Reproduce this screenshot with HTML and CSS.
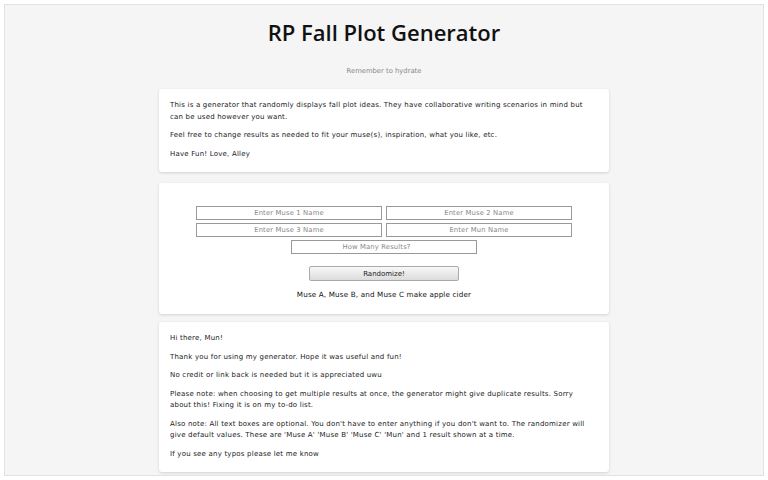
FILE: index.html
```html
<!DOCTYPE html>
<html lang="en">
<head>
    <meta charset="UTF-8">
    <meta name="viewport" content="width=device-width, initial-scale=1.0">
    <title>RP Fall Plot Generator</title>
    <link rel="stylesheet" href="styles.css">
</head>
<body>
    <div class="page">
        <h1>RP Fall Plot Generator</h1>
        <p class="tagline">Remember to hydrate</p>

        <div class="card">
            <p>This is a generator that randomly displays fall plot ideas. They have collaborative writing scenarios in mind but can be used however you want.</p>
            <p>Feel free to change results as needed to fit your muse(s), inspiration, what you like, etc.</p>
            <p>Have Fun! Love, Alley</p>
        </div>

        <div class="card generator">
            <div class="fields">
                <input type="text" id="muse1" placeholder="Enter Muse 1 Name">
                <input type="text" id="muse2" placeholder="Enter Muse 2 Name">
                <input type="text" id="muse3" placeholder="Enter Muse 3 Name">
                <input type="text" id="mun" placeholder="Enter Mun Name">
                <input type="number" id="count" class="wide" placeholder="How Many Results?">
            </div>
            <button id="randomizeBtn">Randomize!</button>
            <p id="result">Muse A, Muse B, and Muse C make apple cider</p>
        </div>

        <div class="card">
            <p>Hi there, Mun!</p>
            <p>Thank you for using my generator. Hope it was useful and fun!</p>
            <p>No credit or link back is needed but it is appreciated uwu</p>
            <p>Please note: when choosing to get multiple results at once, the generator might give duplicate results. Sorry about this! Fixing it is on my to-do list.</p>
            <p>Also note: All text boxes are optional. You don't have to enter anything if you don't want to. The randomizer will give default values. These are 'Muse A' 'Muse B' 'Muse C' 'Mun' and 1 result shown at a time.</p>
            <p>If you see any typos please let me know</p>
        </div>
    </div>
</body>
</html>
```

FILE: styles.css
```css
body {
    font-family: "DejaVu Sans", sans-serif;
    margin: 4px;
    background-color: #fff;
    color: #222;
}
.page {
    background-color: #f5f5f5;
    border: 1px solid #e2e2e2;
    height: 472px;
    box-sizing: border-box;
    padding-top: 12px;
    overflow: hidden;
}
h1 {
    font-family: "Open Sans", sans-serif;
    text-align: center;
    font-size: 22px;
    font-weight: 600;
    margin: 0;
    color: #111;
}
.tagline {
    text-align: center;
    font-size: 6.8px;
    color: #888;
    margin: 20px 0 14px;
}
.card {
    background-color: #fff;
    width: 450px;
    margin: 0 auto 11px;
    box-sizing: border-box;
    padding: 11px 14px 5px 11px;
    border-radius: 3px;
    box-shadow: 0 1px 3px rgba(0,0,0,0.15);
    font-size: 7px;
    letter-spacing: 0.2px;
    line-height: 11.5px;
}
.card p {
    margin: 0 0 7px;
}
.generator {
    text-align: center;
    padding: 23px 11px 6px;
    margin-bottom: 8px;
    letter-spacing: 0;
}
.fields {
    display: grid;
    grid-template-columns: 186px 186px;
    justify-content: center;
    gap: 3px 4px;
}
input {
    font-family: inherit;
    font-size: 6.8px;
    letter-spacing: 0.15px;
    height: 14px;
    box-sizing: border-box;
    border: 1px solid #999;
    padding: 0;
    text-align: center;
}
input::placeholder {
    color: #888;
}
.wide {
    grid-column: 1 / 3;
    justify-self: center;
    width: 186px;
}
button {
    font-family: inherit;
    font-size: 7px;
    width: 150px;
    height: 15px;
    margin-top: 12px;
    border: 1px solid #aaa;
    border-radius: 2px;
    background: linear-gradient(#f8f8f8, #dcdcdc);
    color: #222;
}
#result {
    margin: 8px 0 7px;
    font-size: 7.2px;
    line-height: 12px;
    letter-spacing: 0.15px;
    color: #111;
}
```
